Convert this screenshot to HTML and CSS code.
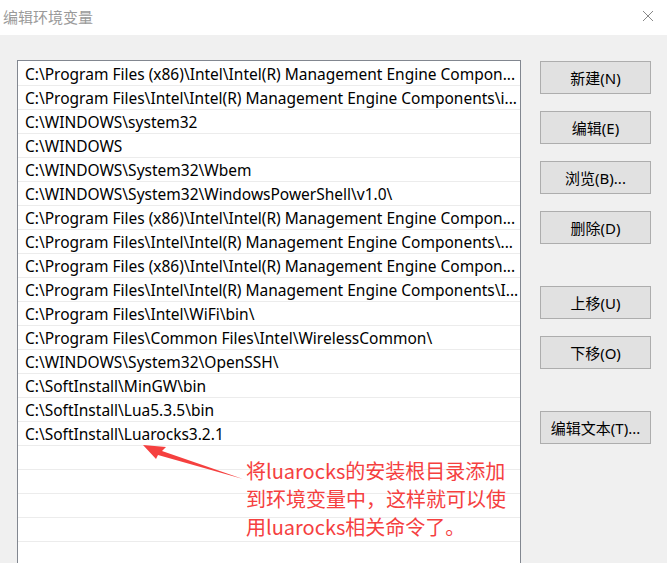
FILE: index.html
```html
<!DOCTYPE html>
<html lang="zh-CN">
<head>
<meta charset="utf-8">
<title>编辑环境变量</title>
<link rel="stylesheet" href="styles.css">
</head>
<body>
<div class="titlebar">
  <span class="title">编辑环境变量</span>
  <svg class="close" width="12" height="12" viewBox="0 0 12 12"><path d="M1 1 L11 11 M11 1 L1 11" stroke="#888" stroke-width="1" fill="none"/></svg>
</div>
<div class="content">
  <div class="list">
    <div class="row">C:\Program Files (x86)\Intel\Intel(R) Management Engine Compon...</div>
    <div class="row">C:\Program Files\Intel\Intel(R) Management Engine Components\i...</div>
    <div class="row">C:\WINDOWS\system32</div>
    <div class="row">C:\WINDOWS</div>
    <div class="row">C:\WINDOWS\System32\Wbem</div>
    <div class="row">C:\WINDOWS\System32\WindowsPowerShell\v1.0\</div>
    <div class="row">C:\Program Files (x86)\Intel\Intel(R) Management Engine Compon...</div>
    <div class="row">C:\Program Files\Intel\Intel(R) Management Engine Components\...</div>
    <div class="row">C:\Program Files (x86)\Intel\Intel(R) Management Engine Compon...</div>
    <div class="row">C:\Program Files\Intel\Intel(R) Management Engine Components\I...</div>
    <div class="row">C:\Program Files\Intel\WiFi\bin\</div>
    <div class="row">C:\Program Files\Common Files\Intel\WirelessCommon\</div>
    <div class="row">C:\WINDOWS\System32\OpenSSH\</div>
    <div class="row">C:\SoftInstall\MinGW\bin</div>
    <div class="row">C:\SoftInstall\Lua5.3.5\bin</div>
    <div class="row">C:\SoftInstall\Luarocks3.2.1</div>
    <div class="row"></div>
    <div class="row"></div>
    <div class="row"></div>
    <div class="row"></div>
    <div class="row"></div>
  </div>
  <div class="buttons">
    <button class="btn">新建(N)</button>
    <button class="btn">编辑(E)</button>
    <button class="btn">浏览(B)...</button>
    <button class="btn">删除(D)</button>
    <button class="btn btn-gap">上移(U)</button>
    <button class="btn">下移(O)</button>
    <button class="btn btn-gap">编辑文本(T)...</button>
  </div>
</div>
<svg class="arrow" width="667" height="563" viewBox="0 0 667 563">
  <polygon points="143,445 166,447 162,451 243,479 158,455 156,459" fill="#f5403f"/>
</svg>
<div class="note">将luarocks的安装根目录添加<br>到环境变量中，这样就可以使<br>用luarocks相关命令了。</div>
</body>
</html>
```
FILE: styles.css
```css
html, body {
  margin: 0;
  padding: 0;
}
body {
  width: 667px;
  height: 563px;
  overflow: hidden;
  background: #f0f0f0;
  font-family: "Noto Sans", "Noto Sans CJK SC", sans-serif;
  position: relative;
}
.titlebar {
  height: 35px;
  background: #ffffff;
  display: flex;
  align-items: center;
  justify-content: space-between;
  padding: 0 13px 0 3px;
}
.title {
  font-family: "Noto Sans CJK SC", sans-serif;
  font-size: 15px;
  color: #9a9a9a;
  margin-top: -2px;
}
.close {
  margin-top: -3px;
}
.content {
  display: flex;
  align-items: flex-start;
  padding: 25px 0 0 17px;
  gap: 19px;
}
.list {
  width: 502px;
  height: 520px;
  background: #ffffff;
  border: 1px solid #828790;
  padding-top: 1px;
  overflow: hidden;
}
.row {
  height: 23px;
  border-bottom: 1px solid #ececec;
  padding-left: 7px;
  font-size: 15.5px;
  line-height: 24px;
  color: #000;
  white-space: nowrap;
  overflow: hidden;
}
.buttons {
  display: flex;
  flex-direction: column;
  gap: 17px;
  padding-top: 1px;
}
.btn {
  width: 111px;
  height: 33px;
  margin: 0;
  padding: 0 0 1px 0;
  background: #e1e1e1;
  border: 1px solid #adadad;
  font-family: "Noto Sans", "Noto Sans CJK SC", sans-serif;
  font-size: 15px;
  color: #000;
}
.btn-gap {
  margin-top: 25px;
}
.arrow {
  position: absolute;
  left: 0;
  top: 0;
}
.note {
  position: absolute;
  left: 246px;
  top: 457px;
  font-family: "Noto Sans CJK SC", sans-serif;
  font-size: 20px;
  line-height: 28px;
  color: #f5403f;
}
```
